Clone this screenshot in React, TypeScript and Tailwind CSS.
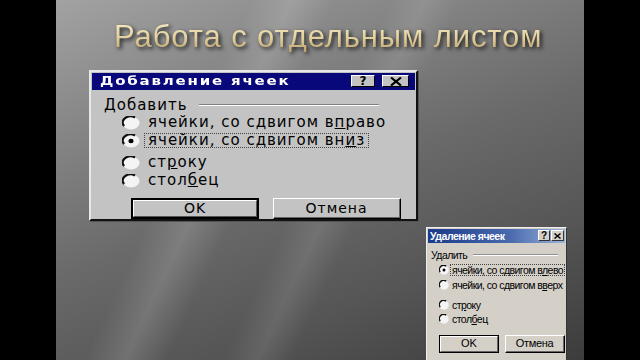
import React from "react";

function Radio({ checked, small }: { checked?: boolean; small?: boolean }) {
  const w = small ? 10 : 18;
  const h = small ? 10 : 14;
  return (
    <svg width={w} height={h} viewBox="0 0 18 14" preserveAspectRatio="none" className="shrink-0">
      <ellipse cx="9" cy="7" rx="8.5" ry="6.5" fill="#f4f4f4" />
      <path d="M2.2 10 A8 6 0 0 1 13 1.4" stroke="#111" strokeWidth="2.2" fill="none" />
      {checked && <ellipse cx="9" cy="7" rx="2.6" ry="2.2" fill="#000" />}
    </svg>
  );
}

function BigDialog() {
  const row = "flex items-center h-[16px]";
  const txt = "text-[15px] leading-[13px] text-black tracking-[1px] whitespace-nowrap";
  return (
    <div className="ml-[33px] mt-[3px] w-[329px] h-[155px] bg-[#c3c3c3] border-t-2 border-l-2 border-t-[#e8e8e8] border-l-[#e8e8e8] border-r-2 border-b-2 border-r-[#111] border-b-[#111] shadow-[1px_1px_0_#555] font-['DejaVu_Sans',sans-serif] flex flex-col">
      <div className="mx-[1px] mt-[1px] h-[17px] bg-[#08087a] flex items-center pl-[8px] pr-[6px]">
        <span className="text-white font-bold text-[15px] leading-none tracking-[1.8px] [transform:scaleY(0.85)] whitespace-nowrap">Добавление ячеек</span>
        <div className="ml-auto flex gap-[7px]">
          <div className="w-[24px] h-[12px] bg-[#c3c3c3] border border-t-white border-l-white border-r-black border-b-black flex items-center justify-center text-[12px] font-bold leading-none text-black">?</div>
          <div className="w-[27px] h-[12px] bg-[#c3c3c3] border border-t-white border-l-white border-r-black border-b-black flex items-center justify-center">
            <svg width="14" height="9" viewBox="0 0 14 9"><path d="M2 0.5 L12 8.5 M12 0.5 L2 8.5" stroke="#000" strokeWidth="2.2" /></svg>
          </div>
        </div>
      </div>
      <div className="flex items-center mt-[9px] pl-[13px] pr-[37px]">
        <span className={txt}>Добавить</span>
        <div className="flex-1 ml-[11px] h-[2px] border-t border-t-[#808080] border-b border-b-white" />
      </div>
      <div className="pl-[31px] flex flex-col mt-[3px]">
        <div className={row}>
          <Radio />
          <span className={`${txt} ml-[8px]`}>ячейки, со сдвигом в<u>п</u>раво</span>
        </div>
        <div className={`${row} mt-[2px]`}>
          <Radio checked />
          <span className={`${txt} ml-[4px] px-[3px] border border-dotted border-[#444]`}>ячейки, со сдвигом вн<u>и</u>з</span>
        </div>
        <div className={`${row} mt-[6px]`}>
          <Radio />
          <span className={`${txt} ml-[8px]`}>ст<u>р</u>оку</span>
        </div>
        <div className={`${row} mt-[2px]`}>
          <Radio />
          <span className={`${txt} ml-[8px]`}>стол<u>б</u>ец</span>
        </div>
      </div>
      <div className="flex pl-[40px] gap-[14px] mt-[9px]">
        <div className="w-[128px] h-[21px] border-2 border-black bg-[#c3c3c3] flex">
          <div className="flex-1 border border-t-white border-l-white border-r-[#555] border-b-[#555] flex items-center justify-center text-[14px] leading-none tracking-[0.8px]">OK</div>
        </div>
        <div className="w-[128px] h-[21px] bg-[#c3c3c3] border border-t-white border-l-white border-r-black border-b-black flex">
          <div className="flex-1 border-r border-b border-r-[#666] border-b-[#666] flex items-center justify-center text-[14px] leading-none tracking-[1px]">Отмена</div>
        </div>
      </div>
    </div>
  );
}

function SmallDialog() {
  const txt = "text-[10.5px] leading-[10px] text-black tracking-[-0.55px] whitespace-nowrap";
  const row = "flex items-center h-[12px]";
  return (
    <div className="mt-[6px] ml-[370px] w-[141px] h-[140px] bg-[#d4d0c8] border-t border-l border-t-[#eee] border-l-[#eee] border-r border-r-[#333] font-['Liberation_Sans',sans-serif] flex flex-col">
      <div className="mx-[1px] mt-[1px] h-[14px] bg-[linear-gradient(90deg,#1a3a8a_0%,#4a6aae_60%,#9ab4dc_100%)] flex items-center pl-[2px] pr-[1px]">
        <span className="text-white font-bold text-[10.5px] leading-none tracking-[-0.5px] whitespace-nowrap">Удаление ячеек</span>
        <div className="ml-auto flex gap-[1px]">
          <div className="w-[12px] h-[11px] bg-[#d4d0c8] border border-t-white border-l-white border-r-[#333] border-b-[#333] flex items-center justify-center text-[10px] font-bold leading-none">?</div>
          <div className="w-[13px] h-[11px] bg-[#d4d0c8] border border-t-white border-l-white border-r-[#333] border-b-[#333] flex items-center justify-center">
            <svg width="7" height="6" viewBox="0 0 7 6"><path d="M0.5 0.5 L6.5 5.5 M6.5 0.5 L0.5 5.5" stroke="#000" strokeWidth="1.4" /></svg>
          </div>
        </div>
      </div>
      <div className="flex items-center mt-[7px] pl-[4px] pr-[8px]">
        <span className={txt}>Удалить</span>
        <div className="flex-1 ml-[6px] h-[2px] border-t border-t-[#909090] border-b border-b-white" />
      </div>
      <div className="pl-[12px] flex flex-col mt-[4px]">
        <div className={row}>
          <Radio checked small />
          <span className={`${txt} ml-[1px] px-[1px] border border-dotted border-[#444]`}>ячейки, со сдвигом в<u>л</u>ево</span>
        </div>
        <div className={`${row} mt-[3px]`}>
          <Radio small />
          <span className={`${txt} ml-[3px]`}>ячейки, со сдвигом в<u>в</u>ерх</span>
        </div>
        <div className={`${row} mt-[8px]`}>
          <Radio small />
          <span className={`${txt} ml-[3px]`}>ст<u>р</u>оку</span>
        </div>
        <div className={`${row} mt-[2px]`}>
          <Radio small />
          <span className={`${txt} ml-[3px]`}>стол<u>б</u>ец</span>
        </div>
      </div>
      <div className="flex pl-[12px] gap-[6px] mt-[10px]">
        <div className="w-[60px] h-[18px] border border-black bg-[#d4d0c8] flex">
          <div className="flex-1 border border-t-white border-l-white border-r-[#666] border-b-[#666] flex items-center justify-center text-[11px] leading-none">OK</div>
        </div>
        <div className="w-[60px] h-[18px] bg-[#d4d0c8] border border-t-white border-l-white border-r-black border-b-black flex">
          <div className="flex-1 border-r border-b border-r-[#666] border-b-[#666] flex items-center justify-center text-[11px] leading-none tracking-[-0.3px]">Отмена</div>
        </div>
      </div>
    </div>
  );
}

export default function App() {
  return (
    <div className="w-[640px] h-[360px] bg-black flex overflow-hidden">
      <div className="ml-[56px] w-[528px] h-[360px] overflow-hidden flex flex-col bg-[linear-gradient(115deg,rgba(255,255,255,0)_28%,rgba(255,255,255,0.14)_34%,rgba(255,255,255,0)_40%,rgba(255,255,255,0)_48%,rgba(255,255,255,0.1)_53%,rgba(255,255,255,0)_58%),linear-gradient(160deg,#a2a2a2_0%,#858585_25%,#6a6a6a_50%,#555555_75%,#3c3c3c_100%)]">
        <div className="h-[70px] flex items-center pl-[58px] pt-[6px]">
          <span className="font-['Liberation_Sans',sans-serif] text-[31px] leading-none tracking-[0.9px] bg-[linear-gradient(180deg,#f6ecc6_0%,#e2d09c_55%,#bba06a_100%)] bg-clip-text text-transparent drop-shadow-[2px_2px_2px_rgba(0,0,0,0.85)] whitespace-nowrap">
            Работа с отдельным листом
          </span>
        </div>
        <BigDialog />
        <SmallDialog />
      </div>
    </div>
  );
}
